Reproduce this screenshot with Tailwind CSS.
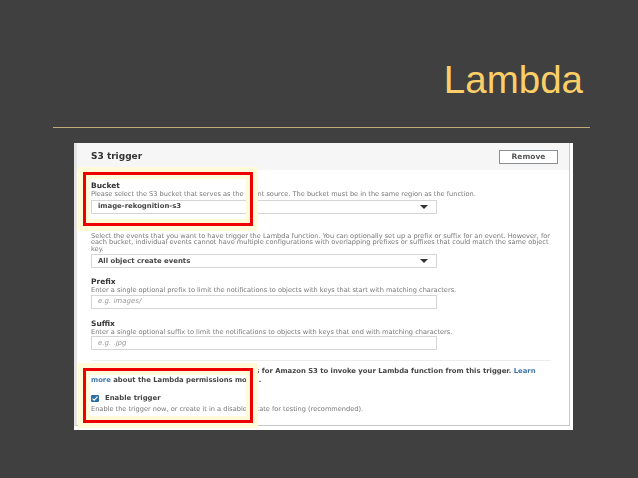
<!DOCTYPE html>
<html lang="en">
<head>
  <meta charset="UTF-8" />
  <title>Lambda</title>
  <script src="https://cdn.jsdelivr.net/npm/@tailwindcss/browser@4"></script>
</head>
<body class="bg-[#404040] font-['Liberation_Sans',sans-serif]">
<div class="relative w-[638px] h-[478px] overflow-hidden pt-[57px]">
  <h1 class="text-right pr-[55px] text-[38.5px] leading-[45px] text-[#fbcf68]">Lambda</h1>
  <div class="ml-[53px] mt-[25px] w-[537px] h-px bg-[#c4ab78]"></div>

  <!-- screenshot of the aws console -->
  <div class="ml-[74px] mt-[15px] w-[499px] h-[287px] bg-white pr-[3px] pb-[4px] font-['DejaVu_Sans',sans-serif] blur-[0.4px]">
    <div class="h-full border-r border-b border-[#c8c8c8] border-l-[3px] border-l-[#e4e4e4]">
      <div class="h-[27px] bg-[#f6f6f6] flex items-center justify-between pl-[14px] pr-[11px]">
        <span class="text-[9px] font-bold text-[#333]">S3 trigger</span>
        <span class="w-[59px] h-[14px] border border-[#8a8f94] bg-white flex items-center justify-center text-[7.5px] font-bold text-[#555]">Remove</span>
      </div>
      <div class="pl-[14px] pr-[18px] pt-[12px] text-[6.6px] leading-[6.5px] text-[#777]">
        <div class="text-[7.5px] leading-[8px] font-bold text-[#333]">Bucket</div>
        <div class="mt-[1px]">Please select the S3 bucket that serves as the event source. The bucket must be in the same region as the function.</div>
        <div class="mt-[2px] w-[346px] h-[14px] border border-[#d5d5d5] pl-[6px] pr-[8px] flex items-center justify-between text-[6.9px] font-bold text-[#444]">
          <span>image-rekognition-s3</span>
          <span class="w-0 h-0 border-x-[4px] border-x-transparent border-t-[4px] border-t-[#333]"></span>
        </div>
        <div class="mt-[19px]">Select the events that you want to have trigger the Lambda function. You can optionally set up a prefix or suffix for an event. However, for each bucket, individual events cannot have multiple configurations with overlapping prefixes or suffixes that could match the same object key.</div>
        <div class="mt-[2px] w-[346px] h-[14px] border border-[#d5d5d5] pl-[6px] pr-[8px] flex items-center justify-between text-[6.9px] font-bold text-[#444]">
          <span>All object create events</span>
          <span class="w-0 h-0 border-x-[4px] border-x-transparent border-t-[4px] border-t-[#333]"></span>
        </div>
        <div class="mt-[10px] text-[7.5px] leading-[8px] font-bold text-[#333]">Prefix</div>
        <div class="mt-[1px]">Enter a single optional prefix to limit the notifications to objects with keys that start with matching characters.</div>
        <div class="mt-[1px] w-[346px] h-[14px] border border-[#d5d5d5] pl-[6px] flex items-center italic text-[7px] text-[#999]">e.g. images/</div>
        <div class="mt-[11px] text-[7.5px] leading-[8px] font-bold text-[#333]">Suffix</div>
        <div class="mt-[1px]">Enter a single optional suffix to limit the notifications to objects with keys that end with matching characters.</div>
        <div class="mt-[1px] w-[346px] h-[14px] border border-[#d5d5d5] pl-[6px] flex items-center italic text-[7px] text-[#999]">e.g. .jpg</div>
        <div class="mt-[10px] h-px bg-[#ececec]"></div>
        <div class="mt-[6px] text-[6.85px] leading-[9px] font-bold text-[#444]">Lambda will add the necessary permissions for Amazon S3 to invoke your Lambda function from this trigger. <span class="text-[#3f77ab]">Learn more</span> about the Lambda permissions model.</div>
        <div class="mt-[9px] flex items-center gap-[6px] text-[6.9px] leading-[8px] font-bold text-[#444]">
          <span class="w-[8px] h-[7px] bg-[#2f6fa8] rounded-[1px] flex items-center justify-center">
            <svg viewBox="0 0 8 7" class="w-[8px] h-[7px]"><path d="M1.5 3.6 3.2 5.2 6.5 1.6" fill="none" stroke="#fff" stroke-width="1.2"/></svg>
          </span>
          <span>Enable trigger</span>
        </div>
        <div class="mt-[4px]">Enable the trigger now, or create it in a disabled state for testing (recommended).</div>
      </div>
    </div>
  </div>

  <!-- red callouts -->
  <div class="absolute left-[83px] top-[172px] w-[170px] h-[54px] border-[3px] border-[#ee0000] shadow-[0_0_0_5px_#fffbd8,inset_0_0_0_4px_#fffbd8]"></div>
  <div class="absolute left-[83px] top-[368px] w-[170px] h-[55px] border-[3px] border-[#ee0000] shadow-[0_0_0_5px_#fffbd8,inset_0_0_0_4px_#fffbd8]"></div>
</div>
</body>
</html>
